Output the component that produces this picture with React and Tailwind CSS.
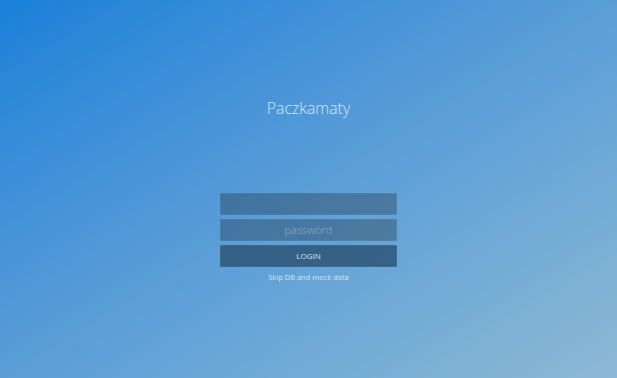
import React from 'react';

export default function App() {
  return (
    <div
      className="w-[617px] h-[378px] overflow-hidden bg-gradient-to-br from-[#1680d9] to-[#8cb9d4] flex flex-col items-center"
      style={{ fontFamily: '"Open Sans", "Liberation Sans", sans-serif' }}
    >
      <h1 className="mt-[97px] text-[15.8px] font-light text-[#d6e8f7]">Paczkamaty</h1>
      <form className="mt-[72px] w-[177px] flex flex-col gap-[4px]" onSubmit={e => e.preventDefault()}>
        <input
          type="text"
          className="h-[22px] w-full bg-black/25 border border-white/5 rounded-[1px] text-center text-[11px] font-light text-white outline-none"
        />
        <input
          type="password"
          placeholder="password"
          className="h-[22px] w-full bg-black/25 border border-white/5 rounded-[1px] text-center text-[11px] font-light text-white outline-none placeholder:text-[#8eaac4]"
        />
        <button className="h-[22px] w-full bg-[#2e5578]/85 border border-white/5 rounded-[1px] text-[8px] text-[#d7e3ee]">
          LOGIN
        </button>
        <a className="mt-[1px] text-center text-[7.5px] text-[#d2e4f2] cursor-pointer">Skip DB and mock data</a>
      </form>
    </div>
  );
}
